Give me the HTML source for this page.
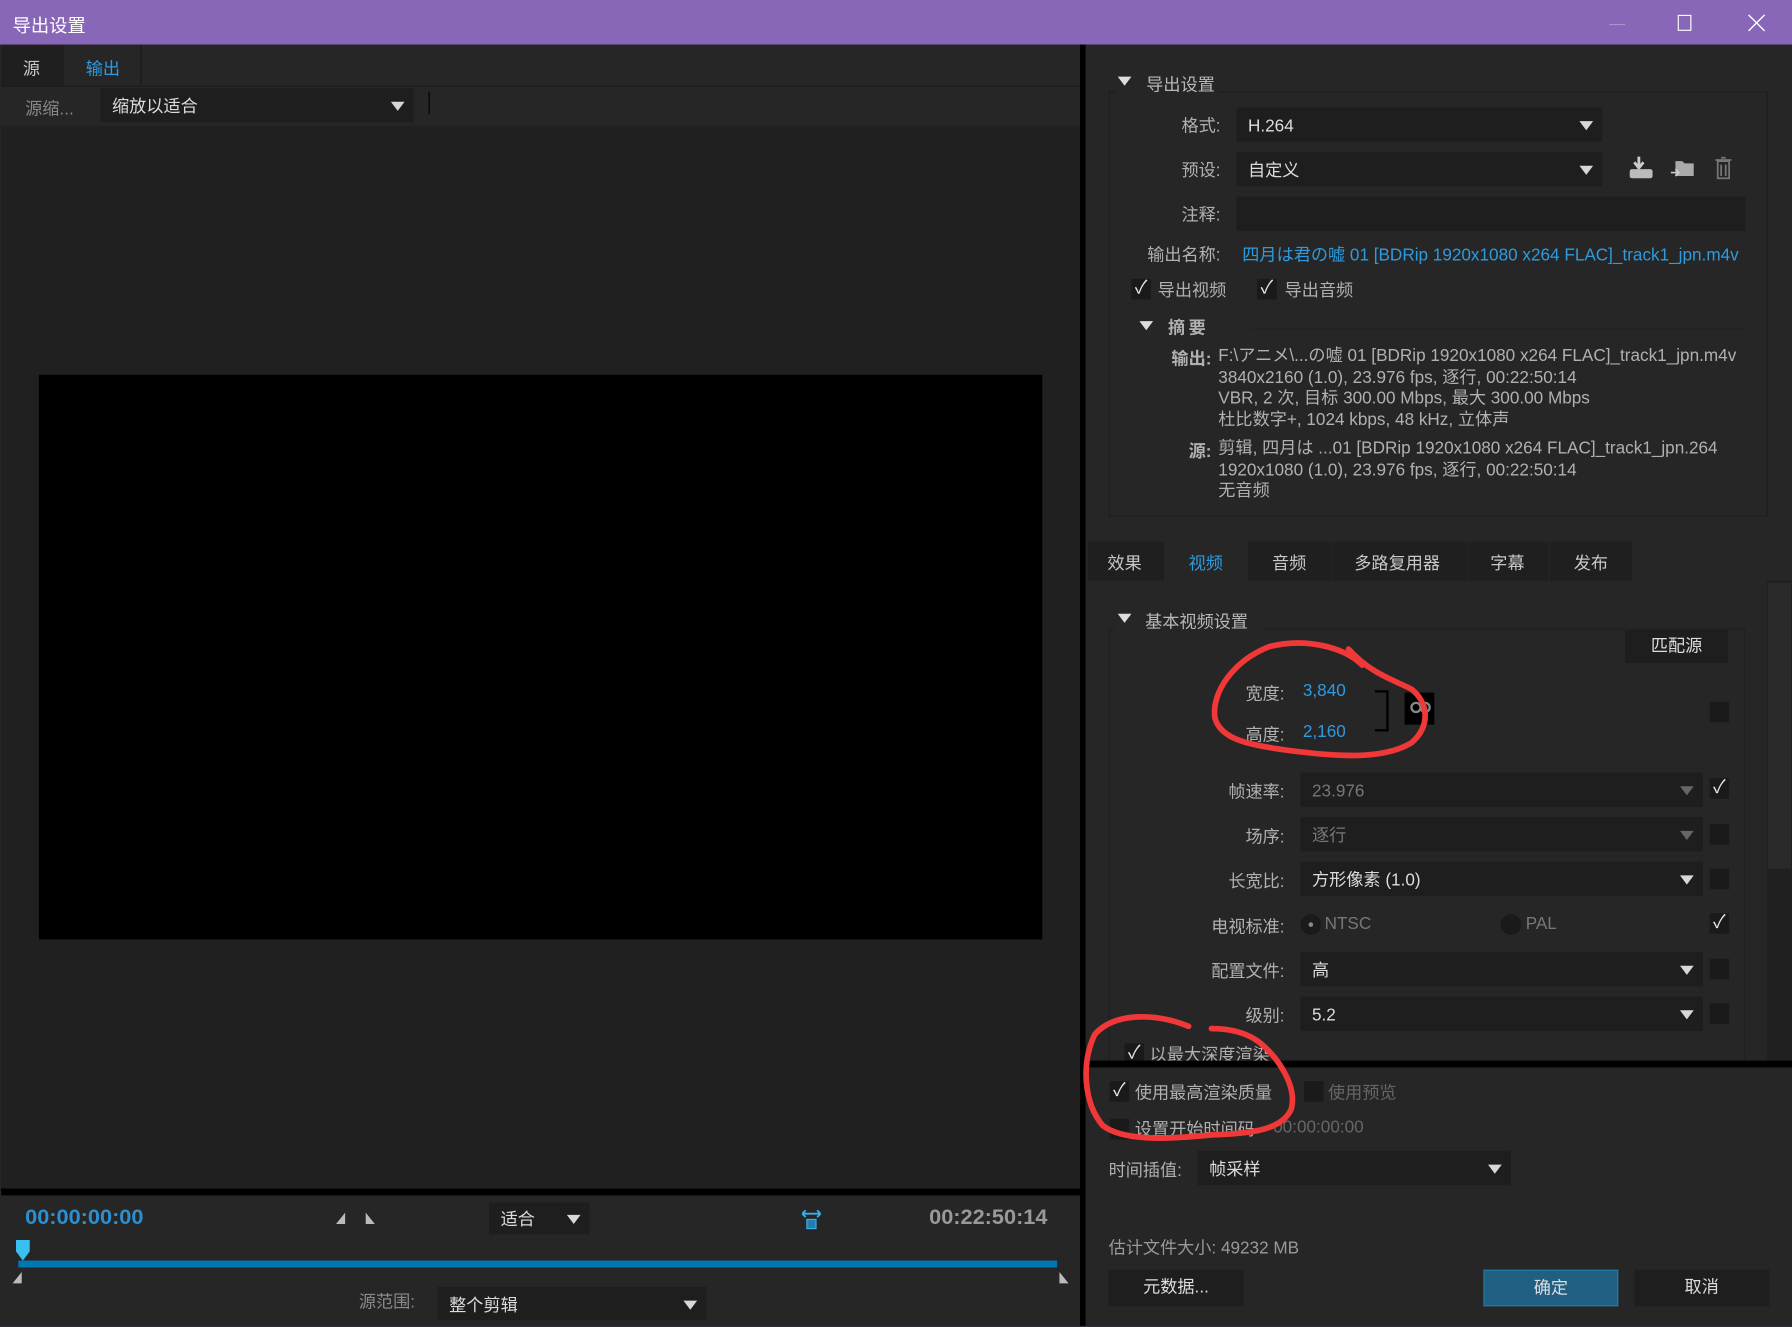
<!DOCTYPE html>
<html><head><meta charset="utf-8">
<style>
*{margin:0;padding:0;box-sizing:border-box}
html,body{width:1792px;height:1327px;overflow:hidden;background:#8866b8}
#w{position:absolute;left:0;top:0;width:1568px;height:1161px;transform:scale(1.142857);transform-origin:0 0;background:#262626;font-family:"Liberation Sans","Noto Sans CJK SC",sans-serif;font-size:15px;color:#b0b0b0}
.a{position:absolute;white-space:nowrap}
.dd{position:absolute;background:#1e1e1e;color:#dcdcdc;padding-left:10px;padding-top:2px;line-height:30px}
.dd:after{content:"";position:absolute;right:8px;top:50%;margin-top:-3px;border-left:6px solid transparent;border-right:6px solid transparent;border-top:8px solid #d8d8d8}
.dd.g{color:#777}.dd.g:after{border-top-color:#666}
.lb{position:absolute;text-align:right;width:120px;white-space:nowrap}
.cb{position:absolute;width:17px;height:18px;background:#1a1a1a;color:#e8e8e8;font-size:16px;line-height:18px;text-align:center}
.bl{color:#2d9be0}
</style></head><body>
<div id="w">
<div class="a" style="left:0;top:0;width:1568px;height:39px;background:#8866b8"></div>
<div class="a" style="left:11px;top:9px;color:#fff;font-size:16px">导出设置</div>
<div class="a" style="left:1408px;top:21px;width:14px;height:1px;background:#a795cc"></div>
<div class="a" style="left:1468px;top:13px;width:12px;height:14px;border:1px solid #fff"></div>
<svg class="a" style="left:1529px;top:12px" width="16" height="16"><path d="M1 1L15 15M15 1L1 15" stroke="#fff" stroke-width="1.2"/></svg>
<div class="a" style="left:1px;top:39px;width:944px;height:1121px;background:#262626"></div>
<div class="a" style="left:1px;top:40px;width:55px;height:35px;background:#1f1f1f"></div>
<div class="a" style="left:20px;top:49px;color:#c8c8c8">源</div>
<div class="a" style="left:56px;top:40px;width:68px;height:35px;background:#262626;border-right:1px solid #1a1a1a"></div>
<div class="a bl" style="left:75px;top:49px">输出</div>
<div class="a" style="left:1px;top:75px;width:944px;height:1px;background:#1c1c1c"></div>
<div class="a" style="left:22px;top:84px;color:#888">源缩...</div>
<div class="dd" style="left:88px;top:77px;width:274px;height:30px">缩放以适合</div>
<div class="a" style="left:375px;top:80px;width:1px;height:20px;background:#000"></div>
<div class="a" style="left:1px;top:110px;width:944px;height:930px;background:#202020"></div>
<div class="a" style="left:34px;top:328px;width:878px;height:494px;background:#000"></div>
<div class="a" style="left:1px;top:1040px;width:944px;height:6px;background:#000"></div>
<div class="a bl" style="left:22px;top:1055px;font-size:19px;font-weight:bold;color:#2b8fd0">00:00:00:00</div>
<svg class="a" style="left:292px;top:1058px" width="44" height="14"><path d="M2 13L10 13L10 3Z M28 3L28 13L36 13Z" fill="#bbb"/></svg>
<div class="dd" style="left:428px;top:1052px;width:88px;height:28px;line-height:28px">适合</div>
<svg class="a" style="left:700px;top:1058px" width="20" height="18"><path d="M2 4h16M2 4l3-3M2 4l3 3M18 4l-3-3M18 4l-3 3" stroke="#3ab0e8" stroke-width="1.6" fill="none"/><rect x="6" y="9" width="8" height="8" fill="#1f7fb0" stroke="#3ab0e8"/></svg>
<div class="a" style="left:813px;top:1055px;font-size:19px;font-weight:bold;color:#999">00:22:50:14</div>
<svg class="a" style="left:12px;top:1085px" width="16" height="18"><path d="M2 0h12v10l-6 8l-6-8z" fill="#3ac0f0"/></svg>
<div class="a" style="left:16px;top:1103px;width:909px;height:6px;background:#0077b3"></div>
<svg class="a" style="left:8px;top:1111px" width="930" height="14"><path d="M3 12L11 12L11 2Z M919 2L919 12L927 12Z" fill="#bbb"/></svg>
<div class="a" style="left:314px;top:1128px;color:#8a8a8a">源范围:</div>
<div class="dd" style="left:383px;top:1126px;width:235px;height:29px;line-height:29px">整个剪辑</div>
<div class="a" style="left:945px;top:39px;width:5px;height:1121px;background:#000"></div>
<div class="a" style="left:950px;top:39px;width:617px;height:1121px;background:#262626"></div>
<div class="a" style="left:970px;top:80px;width:577px;height:372px;border:1px solid #1e1e1e"></div>
<div class="a" style="left:976px;top:62px;width:90px;height:20px;background:#262626"></div>
<div class="a" style="left:978px;top:67px;border-left:6px solid transparent;border-right:6px solid transparent;border-top:8px solid #ddd"></div>
<div class="a" style="left:1003px;top:63px;color:#b8b8b8">导出设置</div>
<div class="lb" style="left:948px;top:99px">格式:</div>
<div class="dd" style="left:1082px;top:94px;width:320px;height:30px">H.264</div>
<div class="lb" style="left:948px;top:138px">预设:</div>
<div class="dd" style="left:1082px;top:133px;width:320px;height:30px">自定义</div>
<svg class="a" style="left:1424px;top:136px" width="100" height="22"><path d="M10 1v9M6 6l4 5l4-5" stroke="#ccc" stroke-width="2.5" fill="none"/><rect x="2" y="12" width="20" height="8" rx="2" fill="#bbb"/><path d="M42 5h6l2 2h8v11h-16z" fill="#aaa"/><path d="M38 15h6M42 12l3 3l-3 3" stroke="#ccc" stroke-width="1.5" fill="none"/><rect x="79" y="5" width="10" height="15" fill="none" stroke="#777" stroke-width="1.5"/><path d="M77 4h14M82 2h4M82 8v10M86 8v10" stroke="#777" stroke-width="1.5"/></svg>
<div class="lb" style="left:948px;top:177px">注释:</div>
<div class="a" style="left:1082px;top:172px;width:445px;height:30px;background:#1e1e1e"></div>
<div class="lb" style="left:948px;top:212px">输出名称:</div>
<div class="a bl" style="left:1087px;top:212px">四月は君の嘘 01 [BDRip 1920x1080 x264 FLAC]_track1_jpn.m4v</div>
<div class="cb" style="left:990px;top:244px">✓</div><div class="a" style="left:1013px;top:243px">导出视频</div>
<div class="cb" style="left:1100px;top:244px">✓</div><div class="a" style="left:1124px;top:243px">导出音频</div>
<div class="a" style="left:997px;top:281px;border-left:6px solid transparent;border-right:6px solid transparent;border-top:8px solid #ddd"></div>
<div class="a" style="left:1022px;top:276px;font-weight:bold;letter-spacing:3px">摘要</div>
<div class="a" style="left:1094px;top:287px;width:433px;height:1px;background:#222"></div>
<div class="a" style="left:1025px;top:303px;font-weight:bold">输出:</div>
<div class="a" style="left:1066px;top:303px;line-height:18.5px">F:\アニメ\...の嘘 01 [BDRip 1920x1080 x264 FLAC]_track1_jpn.m4v<br>3840x2160 (1.0), 23.976 fps, 逐行, 00:22:50:14<br>VBR, 2 次, 目标 300.00 Mbps, 最大 300.00 Mbps<br>杜比数字+, 1024 kbps, 48 kHz, 立体声</div>
<div class="a" style="left:1040px;top:384px;font-weight:bold">源:</div>
<div class="a" style="left:1066px;top:384px;line-height:18.5px">剪辑, 四月は ...01 [BDRip 1920x1080 x264 FLAC]_track1_jpn.264<br>1920x1080 (1.0), 23.976 fps, 逐行, 00:22:50:14<br>无音频</div>
<div class="a" style="left:950px;top:472px;width:617px;height:36px;background:#262626"></div>
<div class="a" style="left:952px;top:474px;width:68px;height:34px;background:#1f1f1f;border-right:1px solid #2a2a2a"></div>
<div class="a" style="left:1021px;top:474px;width:70px;height:34px;background:#262626"></div>
<div class="a" style="left:1092px;top:474px;width:73px;height:34px;background:#1f1f1f"></div>
<div class="a" style="left:1166px;top:474px;width:118px;height:34px;background:#1f1f1f"></div>
<div class="a" style="left:1285px;top:474px;width:70px;height:34px;background:#1f1f1f"></div>
<div class="a" style="left:1356px;top:474px;width:72px;height:34px;background:#1f1f1f"></div>
<div class="a" style="left:969px;top:482px;color:#c8c8c8">效果</div>
<div class="a bl" style="left:1040px;top:482px">视频</div>
<div class="a" style="left:1113px;top:482px;color:#c8c8c8">音频</div>
<div class="a" style="left:1185px;top:482px;color:#c8c8c8">多路复用器</div>
<div class="a" style="left:1304px;top:482px;color:#c8c8c8">字幕</div>
<div class="a" style="left:1377px;top:482px;color:#c8c8c8">发布</div>
<div class="a" style="left:1546px;top:508px;width:22px;height:420px;background:#202020"></div>
<div class="a" style="left:1547px;top:510px;width:20px;height:250px;background:#2a2a2a"></div>
<div class="a" style="left:970px;top:550px;width:557px;height:380px;border:1px solid #202020;border-bottom:none"></div>
<div class="a" style="left:976px;top:532px;width:130px;height:20px;background:#262626"></div>
<div class="a" style="left:978px;top:537px;border-left:6px solid transparent;border-right:6px solid transparent;border-top:8px solid #ddd"></div>
<div class="a" style="left:1002px;top:533px;color:#b8b8b8">基本视频设置</div>
<div class="a" style="left:1422px;top:551px;width:90px;height:29px;background:#1e1e1e;color:#ddd;text-align:center;line-height:29px">匹配源</div>
<div class="lb" style="left:1004px;top:596px">宽度:</div><div class="a bl" style="left:1140px;top:596px">3,840</div>
<div class="lb" style="left:1004px;top:632px">高度:</div><div class="a bl" style="left:1140px;top:632px">2,160</div>
<div class="a" style="left:1203px;top:604px;width:12px;height:36px;border:2px solid #000;border-left:none"></div>
<div class="a" style="left:1229px;top:606px;width:26px;height:28px;background:#000"></div>
<svg class="a" style="left:1232px;top:612px" width="22" height="14"><circle cx="7" cy="7" r="4" fill="none" stroke="#888" stroke-width="2"/><circle cx="15" cy="7" r="4" fill="none" stroke="#888" stroke-width="2"/></svg>
<div class="cb" style="left:1496px;top:614px"></div>
<div class="lb" style="left:1004px;top:682px">帧速率:</div><div class="dd g" style="left:1138px;top:676px;width:352px;height:30px">23.976</div><div class="cb" style="left:1496px;top:681px">✓</div>
<div class="lb" style="left:1004px;top:721px">场序:</div><div class="dd g" style="left:1138px;top:715px;width:352px;height:30px">逐行</div><div class="cb" style="left:1496px;top:721px"></div>
<div class="lb" style="left:1004px;top:760px">长宽比:</div><div class="dd" style="left:1138px;top:754px;width:352px;height:30px">方形像素 (1.0)</div><div class="cb" style="left:1496px;top:760px"></div>
<div class="lb" style="left:1004px;top:800px">电视标准:</div>
<div class="a" style="left:1138px;top:800px;width:18px;height:18px;border-radius:50%;background:#1a1a1a"></div><div class="a" style="left:1145px;top:807px;width:4px;height:4px;border-radius:50%;background:#888"></div>
<div class="a" style="left:1159px;top:800px;color:#777">NTSC</div>
<div class="a" style="left:1313px;top:800px;width:18px;height:18px;border-radius:50%;background:#1a1a1a"></div>
<div class="a" style="left:1335px;top:800px;color:#777">PAL</div>
<div class="cb" style="left:1496px;top:799px">✓</div>
<div class="lb" style="left:1004px;top:839px">配置文件:</div><div class="dd" style="left:1138px;top:833px;width:352px;height:30px">高</div><div class="cb" style="left:1496px;top:839px"></div>
<div class="lb" style="left:1004px;top:878px">级别:</div><div class="dd" style="left:1138px;top:872px;width:352px;height:30px">5.2</div><div class="cb" style="left:1496px;top:878px"></div>
<div class="cb" style="left:984px;top:913px">✓</div><div class="a" style="left:1006px;top:912px">以最大深度渲染</div>
<div class="a" style="left:950px;top:928px;width:618px;height:6px;background:#000"></div>
<div class="cb" style="left:971px;top:946px">✓</div><div class="a" style="left:993px;top:945px">使用最高渲染质量</div>
<div class="cb" style="left:1141px;top:946px"></div><div class="a" style="left:1162px;top:945px;color:#666">使用预览</div>
<div class="cb" style="left:971px;top:979px"></div><div class="a" style="left:993px;top:977px">设置开始时间码</div><div class="a" style="left:1114px;top:978px;color:#666">00:00:00:00</div>
<div class="a" style="left:970px;top:1013px">时间插值:</div>
<div class="dd" style="left:1048px;top:1007px;width:274px;height:30px">帧采样</div>
<div class="a" style="left:970px;top:1081px;color:#999">估计文件大小: 49232 MB</div>
<div class="a" style="left:970px;top:1111px;width:118px;height:32px;background:#1e1e1e;color:#ddd;text-align:center;line-height:32px">元数据...</div>
<div class="a" style="left:1298px;top:1111px;width:118px;height:32px;background:#1e5f82;color:#ddd;text-align:center;line-height:32px;border:1px solid #2a7aa5">确定</div>
<div class="a" style="left:1430px;top:1111px;width:118px;height:32px;background:#1e1e1e;color:#ddd;text-align:center;line-height:32px">取消</div>
<svg class="a" style="left:0;top:0" width="1568" height="1161"><g fill="none" stroke="#f03838" stroke-width="5" stroke-linecap="round">
<path d="M1192 582C1175 565 1140 558 1110 566C1080 578 1060 605 1063 628C1068 648 1095 652 1130 657C1170 662 1210 665 1235 650C1252 635 1250 615 1235 603C1220 595 1200 590 1180 568"/>
<path d="M1040 898C1010 886 975 886 958 905C946 930 948 965 965 985C985 1000 1030 996 1060 993C1090 992 1122 990 1130 970C1135 950 1118 925 1102 912C1090 903 1075 900 1060 900"/>
</g></svg>
</div>
</body></html>
